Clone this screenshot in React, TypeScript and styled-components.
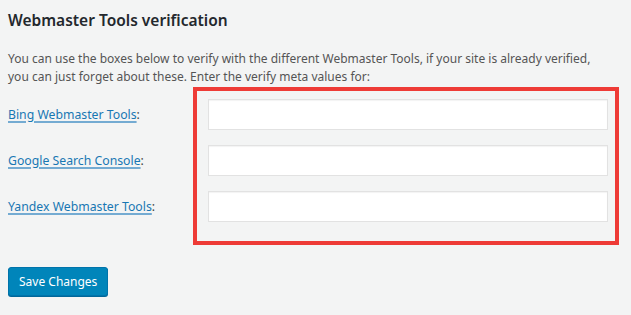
import React from "react";
import styled, { createGlobalStyle } from "styled-components";

const Global = createGlobalStyle`
  html, body { margin: 0; padding: 0; background: #f3f4f4; }
  body { font-family: "Noto Sans", "Open Sans", sans-serif; color: #444; }
`;

const Page = styled.div`
  position: relative;
  width: 631px;
  height: 315px;
  padding: 0 8px;
  box-sizing: border-box;
`;

const Heading = styled.h2`
  margin: 0;
  padding-top: 10px;
  font-size: 15.5px;
  line-height: 20px;
  font-weight: 600;
  color: #23282d;
`;

const Intro = styled.p`
  margin: 20px 0 0;
  font-size: 12px;
  line-height: 18px;
  color: #555;
  white-space: nowrap;
`;

const Form = styled.div`
  display: grid;
  grid-template-columns: 200px 400px;
  grid-auto-rows: 31px;
  row-gap: 15px;
  margin-top: 13px;
`;

const Label = styled.div`
  display: flex;
  align-items: center;
  font-size: 12.25px;
  color: #444;
`;

const Link = styled.a`
  color: #1877b3;
  text-decoration: underline;
  text-decoration-color: #74abd2;
  text-decoration-thickness: 2px;
  text-underline-offset: 2px;
`;

const Input = styled.input`
  box-sizing: border-box;
  width: 400px;
  height: 31px;
  border: 1px solid #e2e2e2;
  box-shadow: inset 0 1px 1px rgba(0, 0, 0, 0.05);
  background: #fff;
  margin: 0;
`;

const Button = styled.button`
  display: block;
  margin-top: 45px;
  height: 29px;
  padding: 0 10px;
  font-family: inherit;
  font-size: 12px;
  color: #fff;
  background: #0085ba;
  border: 1px solid #0073aa;
  border-radius: 3px;
  box-shadow: 0 1px 0 #006799;
`;

const Annotation = styled.div`
  position: absolute;
  left: 193px;
  top: 87px;
  width: 426px;
  height: 158px;
  box-sizing: border-box;
  border: 4px solid #ee3b36;
  pointer-events: none;
`;

const rows = ["Bing Webmaster Tools", "Google Search Console", "Yandex Webmaster Tools"];

export default function App() {
  return (
    <Page>
      <Global />
      <Heading>Webmaster Tools verification</Heading>
      <Intro>
        You can use the boxes below to verify with the different Webmaster Tools, if your site is already verified,
        <br />
        you can just forget about these. Enter the verify meta values for:
      </Intro>
      <Form>
        {rows.map((r) => (
          <React.Fragment key={r}>
            <Label>
              <Link href="#">{r}</Link>:
            </Label>
            <Input type="text" />
          </React.Fragment>
        ))}
      </Form>
      <Button>Save Changes</Button>
      <Annotation />
    </Page>
  );
}
